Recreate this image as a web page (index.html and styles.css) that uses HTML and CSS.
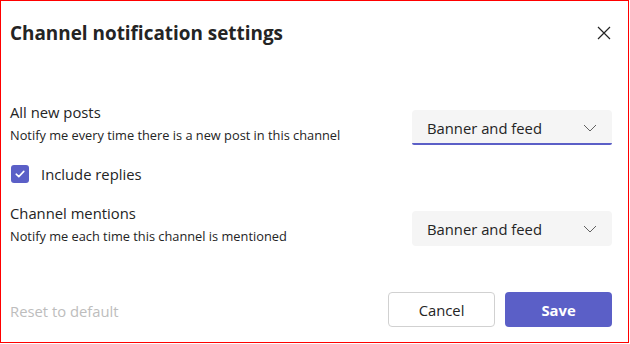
FILE: index.html
```html
<!DOCTYPE html>
<html>
<head>
<meta charset="utf-8">
<link rel="stylesheet" href="styles.css">
</head>
<body>
<div class="dialog">
  <div class="header">
    <h1 class="title">Channel notification settings</h1>
    <button class="close" aria-label="Close">
      <svg width="14" height="14" viewBox="0 0 14 14"><path d="M1 1L13 13M13 1L1 13" stroke="#242424" stroke-width="1.2" fill="none"/></svg>
    </button>
  </div>
  <div class="body">
    <div class="setting">
      <div class="texts">
        <div class="label">All new posts</div>
        <div class="desc">Notify me every time there is a new post in this channel</div>
      </div>
      <div class="select focused">
        <span>Banner and feed</span>
        <svg width="14" height="8" viewBox="0 0 14 8"><path d="M1 1L7 7L13 1" stroke="#616161" stroke-width="1" fill="none"/></svg>
      </div>
    </div>
    <div class="check-row">
      <span class="checkbox">
        <svg width="10" height="8" viewBox="0 0 10 8"><path d="M1.2 4.2L3.8 6.6L8.8 1.4" stroke="#fff" stroke-width="1.6" fill="none" stroke-linecap="round" stroke-linejoin="round"/></svg>
      </span>
      <span class="check-label">Include replies</span>
    </div>
    <div class="setting second">
      <div class="texts">
        <div class="label">Channel mentions</div>
        <div class="desc">Notify me each time this channel is mentioned</div>
      </div>
      <div class="select">
        <span>Banner and feed</span>
        <svg width="14" height="8" viewBox="0 0 14 8"><path d="M1 1L7 7L13 1" stroke="#616161" stroke-width="1" fill="none"/></svg>
      </div>
    </div>
  </div>
  <div class="footer">
    <span class="reset">Reset to default</span>
    <div class="actions">
      <button class="btn cancel">Cancel</button>
      <button class="btn save">Save</button>
    </div>
  </div>
</div>
</body>
</html>
```

FILE: styles.css
```css
html, body {
  margin: 0;
  padding: 0;
  background: #fff;
}
body {
  font-family: "Segoe UI", "Open Sans", "Noto Sans", sans-serif;
  color: #242424;
}
.dialog {
  box-sizing: border-box;
  width: 629px;
  height: 343px;
  border: 1px solid #ff0000;
  padding: 0 16px 0 9px;
  display: flex;
  flex-direction: column;
}
.header {
  display: flex;
  align-items: center;
  justify-content: space-between;
  height: 40px;
  margin-top: 12px;
}
.title {
  margin: 0;
  font-size: 18.9px;
  font-weight: 700;
  line-height: 24px;
}
.close {
  border: 0;
  background: transparent;
  padding: 0;
  width: 14px;
  height: 14px;
  margin-right: 1px;
  display: flex;
}
.body {
  margin-top: 49px;
  display: flex;
  flex-direction: column;
}
.setting {
  display: flex;
  justify-content: space-between;
  align-items: flex-start;
}
.label {
  font-size: 14.8px;
  line-height: 20px;
}
.desc {
  font-size: 12.8px;
  line-height: 18px;
  margin-top: 4px;
}
.select {
  box-sizing: border-box;
  width: 200px;
  height: 35px;
  margin-top: 8px;
  background: #f5f5f5;
  border-radius: 4px;
  display: flex;
  align-items: center;
  justify-content: space-between;
  padding: 0 15px 0 15px;
  font-size: 14.8px;
}
.select.focused {
  border-bottom: 2px solid #5b5fc7;
  border-radius: 4px 4px 2px 2px;
  padding-top: 2px;
}
.check-row {
  display: flex;
  align-items: center;
  margin-top: 19px;
  height: 20px;
}
.checkbox {
  width: 18px;
  height: 18px;
  border-radius: 3px;
  background: #5b5fc7;
  display: flex;
  align-items: center;
  justify-content: center;
  margin-left: 1px;
}
.check-label {
  font-size: 14.8px;
  margin-left: 12px;
}
.second {
  margin-top: 19px;
}
.footer {
  margin-top: auto;
  margin-bottom: 15px;
  display: flex;
  justify-content: space-between;
  align-items: center;
}
.reset {
  font-size: 14.8px;
  color: #bdbdbd;
  padding-top: 2px;
}
.actions {
  display: flex;
  gap: 10px;
}
.btn {
  box-sizing: border-box;
  width: 107px;
  height: 35px;
  border-radius: 4px;
  font-family: inherit;
  font-size: 14.8px;
  padding: 0;
}
.cancel {
  background: #fff;
  border: 1px solid #d1d1d1;
  color: #242424;
}
.save {
  background: #5b5fc7;
  border: 0;
  color: #fff;
  font-weight: 700;
}
```
